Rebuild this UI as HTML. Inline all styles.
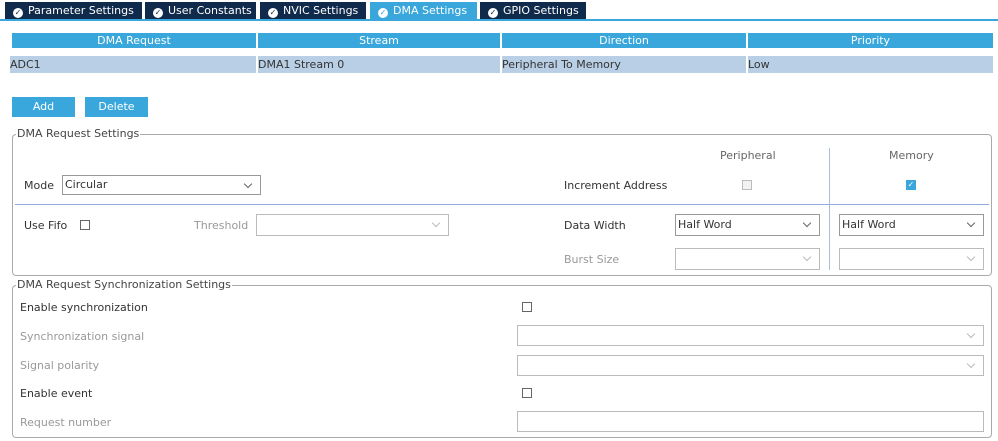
<!DOCTYPE html>
<html><head><style>
*{box-sizing:border-box;margin:0;padding:0}
body{width:998px;height:441px;background:#fff;position:relative;overflow:hidden;font-family:"DejaVu Sans","Liberation Sans",sans-serif;font-size:11px;color:#333}
.a{position:absolute;white-space:nowrap}
.tab{position:absolute;top:2px;height:17px;background:#0f2a4a;color:#fff;line-height:17px;padding-left:8px}
.tab i{display:inline-block;width:10px;height:10px;border-radius:50%;background:#fff;color:#0f2a4a;font-size:8px;line-height:10px;text-align:center;font-style:normal;font-weight:bold;margin-right:5px;vertical-align:-1px}
.th{position:absolute;top:33px;height:15px;background:#39a7db;color:#fff;text-align:center;line-height:15px}
.td{position:absolute;top:56px;height:17px;background:#b9cfe6;line-height:17px;color:#333}
.btn{position:absolute;top:97px;height:20px;background:#39a7db;color:#fff;text-align:center;line-height:20px}
.grp{position:absolute;border:1px solid #aaa;border-radius:4px}
.gt{position:absolute;background:#fff;padding:0 1px;color:#444}
.sel{position:absolute;border:1px solid #999;background:#fff;line-height:18px;padding-left:2px;color:#333}
.sel.d{border-color:#bbb}
.sel:after{content:"";position:absolute;right:9px;top:5px;width:5px;height:5px;border-right:1px solid #666;border-bottom:1px solid #666;transform:rotate(45deg)}
.sel.d:after{border-color:#bbb}
.sel.n:after{display:none}
.cb{position:absolute;width:10px;height:10px;border:1px solid #666;background:#fff}
.g{color:#999}
</style></head><body>
<div class="tab" style="left:5px;width:137px"><i>✓</i>Parameter Settings</div>
<div class="tab" style="left:145px;width:111px"><i>✓</i>User Constants</div>
<div class="tab" style="left:260px;width:106px"><i>✓</i>NVIC Settings</div>
<div class="tab" style="left:370px;width:107px;background:#39a7db"><i style="color:#39a7db">✓</i>DMA Settings</div>
<div class="tab" style="left:480px;width:106px"><i>✓</i>GPIO Settings</div>
<div class="a" style="left:0;top:19px;width:998px;height:2px;background:#39a7db"></div>

<div class="th" style="left:12px;width:244px">DMA Request</div>
<div class="th" style="left:258px;width:242px">Stream</div>
<div class="th" style="left:502px;width:244px">Direction</div>
<div class="th" style="left:748px;width:245px">Priority</div>
<div class="td" style="left:10px;width:246px">ADC1</div>
<div class="td" style="left:258px;width:242px">DMA1 Stream 0</div>
<div class="td" style="left:502px;width:244px">Peripheral To Memory</div>
<div class="td" style="left:748px;width:245px">Low</div>

<div class="btn" style="left:12px;width:63px">Add</div>
<div class="btn" style="left:85px;width:63px">Delete</div>

<div class="grp" style="left:12px;top:134px;width:980px;height:142px"></div>
<div class="gt" style="left:16px;top:127px">DMA Request Settings</div>
<div class="a g" style="left:720px;top:149px;color:#666">Peripheral</div>
<div class="a g" style="left:889px;top:149px;color:#666">Memory</div>
<div class="a" style="left:829px;top:148px;width:1px;height:122px;background:#a8bde0"></div>
<div class="a" style="left:15px;top:204px;width:974px;height:1px;background:#8fa9d8"></div>
<div class="a" style="left:24px;top:179px">Mode</div>
<div class="sel" style="left:62px;top:175px;width:199px;height:20px">Circular</div>
<div class="a" style="left:564px;top:179px">Increment Address</div>
<div class="cb" style="left:742px;top:180px;border-color:#bbb;background:#f2f2f2"></div>
<div class="cb" style="left:906px;top:180px;border-color:#39a7db;background:#39a7db;color:#fff;font-size:8px;line-height:8px;text-align:center">✓</div>
<div class="a" style="left:24px;top:219px">Use Fifo</div>
<div class="cb" style="left:80px;top:220px"></div>
<div class="a g" style="left:194px;top:219px">Threshold</div>
<div class="sel d" style="left:256px;top:214px;width:193px;height:22px"></div>
<div class="a" style="left:564px;top:219px">Data Width</div>
<div class="sel" style="left:675px;top:214px;width:145px;height:22px;line-height:20px">Half Word</div>
<div class="sel" style="left:839px;top:214px;width:145px;height:22px;line-height:20px">Half Word</div>
<div class="a g" style="left:564px;top:253px">Burst Size</div>
<div class="sel d" style="left:675px;top:248px;width:145px;height:22px"></div>
<div class="sel d" style="left:839px;top:248px;width:145px;height:22px"></div>

<div class="grp" style="left:12px;top:285px;width:980px;height:153px"></div>
<div class="gt" style="left:16px;top:278px">DMA Request Synchronization Settings</div>
<div class="a" style="left:20px;top:301px">Enable synchronization</div>
<div class="cb" style="left:522px;top:302px"></div>
<div class="a g" style="left:20px;top:330px">Synchronization signal</div>
<div class="sel d" style="left:517px;top:325px;width:467px;height:21px"></div>
<div class="a g" style="left:20px;top:359px">Signal polarity</div>
<div class="sel d" style="left:517px;top:355px;width:467px;height:21px"></div>
<div class="a" style="left:20px;top:387px">Enable event</div>
<div class="cb" style="left:522px;top:388px"></div>
<div class="a g" style="left:20px;top:416px">Request number</div>
<div class="sel d n" style="left:517px;top:411px;width:467px;height:21px"></div>
</body></html>
